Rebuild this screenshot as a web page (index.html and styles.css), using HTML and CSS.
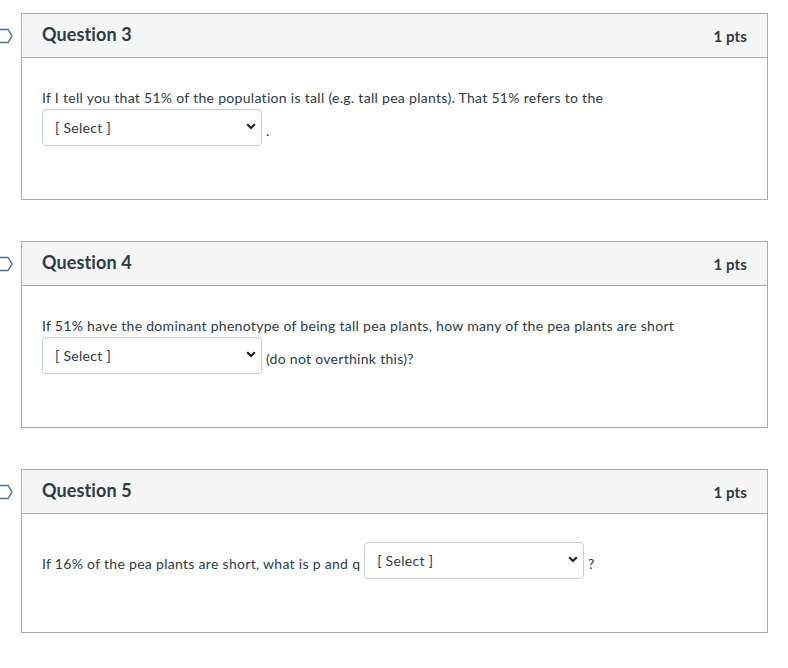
FILE: index.html
```html
<!DOCTYPE html>
<html lang="en">
<head>
<meta charset="utf-8">
<title>Quiz</title>
<link rel="stylesheet" href="styles.css">
</head>
<body>
<main class="quiz">
  <section class="question">
    <svg class="flag" width="16" height="16" viewBox="0 0 16 16" aria-hidden="true"><path d="M-4 1.5 H8 L12 8 L8 14.5 H-4" fill="#fff" stroke="#4d6e8f" stroke-width="1.4" stroke-linejoin="miter"/></svg>
    <header class="q-header">
      <h2 class="q-title">Question 3</h2>
      <span class="q-points">1 pts</span>
    </header>
    <div class="q-body">
      <p class="q-text">If I tell you that 51% of the population is tall (e.g. tall pea plants). That 51% refers to the <span class="select-wrap"><select class="q-select"><option>[ Select ]</option></select><svg class="chev" width="10" height="7" viewBox="0 0 10 7" aria-hidden="true"><path d="M1.2 1.2 L5 5 L8.8 1.2" fill="none" stroke="#222" stroke-width="2.2"/></svg></span> .</p>
    </div>
  </section>

  <section class="question">
    <svg class="flag" width="16" height="16" viewBox="0 0 16 16" aria-hidden="true"><path d="M-4 1.5 H8 L12 8 L8 14.5 H-4" fill="#fff" stroke="#4d6e8f" stroke-width="1.4" stroke-linejoin="miter"/></svg>
    <header class="q-header">
      <h2 class="q-title">Question 4</h2>
      <span class="q-points">1 pts</span>
    </header>
    <div class="q-body">
      <p class="q-text">If 51% have the dominant phenotype of being tall pea plants, how many of the pea plants are short <span class="select-wrap"><select class="q-select"><option>[ Select ]</option></select><svg class="chev" width="10" height="7" viewBox="0 0 10 7" aria-hidden="true"><path d="M1.2 1.2 L5 5 L8.8 1.2" fill="none" stroke="#222" stroke-width="2.2"/></svg></span> (do not overthink this)?</p>
    </div>
  </section>

  <section class="question">
    <svg class="flag" width="16" height="16" viewBox="0 0 16 16" aria-hidden="true"><path d="M-4 1.5 H8 L12 8 L8 14.5 H-4" fill="#fff" stroke="#4d6e8f" stroke-width="1.4" stroke-linejoin="miter"/></svg>
    <header class="q-header">
      <h2 class="q-title">Question 5</h2>
      <span class="q-points">1 pts</span>
    </header>
    <div class="q-body">
      <p class="q-text">If 16% of the pea plants are short, what is p and q <span class="select-wrap"><select class="q-select"><option>[ Select ]</option></select><svg class="chev" width="10" height="7" viewBox="0 0 10 7" aria-hidden="true"><path d="M1.2 1.2 L5 5 L8.8 1.2" fill="none" stroke="#222" stroke-width="2.2"/></svg></span> ?</p>
    </div>
  </section>
</main>
</body>
</html>
```

FILE: styles.css
```css
html, body {
  margin: 0;
  padding: 0;
  background: #fff;
}

body {
  font-family: Lato, "Liberation Sans", sans-serif;
  color: #2d3b45;
}

.quiz {
  display: flex;
  flex-direction: column;
  gap: 41px;
  padding: 13px 21px 0 21px;
  width: 747px;
}

.question {
  position: relative;
  border: 1px solid #aaaaaa;
  background: #fff;
}

.flag {
  position: absolute;
  left: -22px;
  top: 14px;
}

.q-header {
  display: flex;
  align-items: center;
  justify-content: space-between;
  height: 43px;
  padding: 0 20px;
  background: #f5f5f5;
  border-bottom: 1px solid #aaaaaa;
}

.q-title {
  margin: 0;
  font-size: 18px;
  font-weight: 700;
  color: #2d3b45;
  line-height: 1;
  letter-spacing: 0.1px;
  padding-bottom: 3px;
}

.q-points {
  font-size: 15px;
  font-weight: 700;
  color: #2d3b45;
  letter-spacing: 0.1px;
  padding-top: 0;
}

.q-body {
  padding: 28px 20px 52px;
}

.q-text {
  margin: 0;
  font-size: 14px;
  line-height: 23px;
  letter-spacing: 0.3px;
}

.select-wrap {
  position: relative;
  display: inline-block;
  vertical-align: 3px;
  line-height: 0;
  margin-bottom: 1px;
}

.q-select {
  appearance: none;
  -webkit-appearance: none;
  display: inline-block;
  vertical-align: baseline;
  width: 220px;
  height: 37px;
  margin: 0;
  padding: 0 26px 1px 12px;
  border: 1px solid #c7cdd1;
  border-radius: 4px;
  background: #fff;
  font-family: Lato, "Liberation Sans", sans-serif;
  font-size: 14px;
  line-height: normal;
  letter-spacing: 0.3px;
  color: #2d3b45;
}

.chev {
  position: absolute;
  right: 6px;
  top: 14px;
  pointer-events: none;
}
```
